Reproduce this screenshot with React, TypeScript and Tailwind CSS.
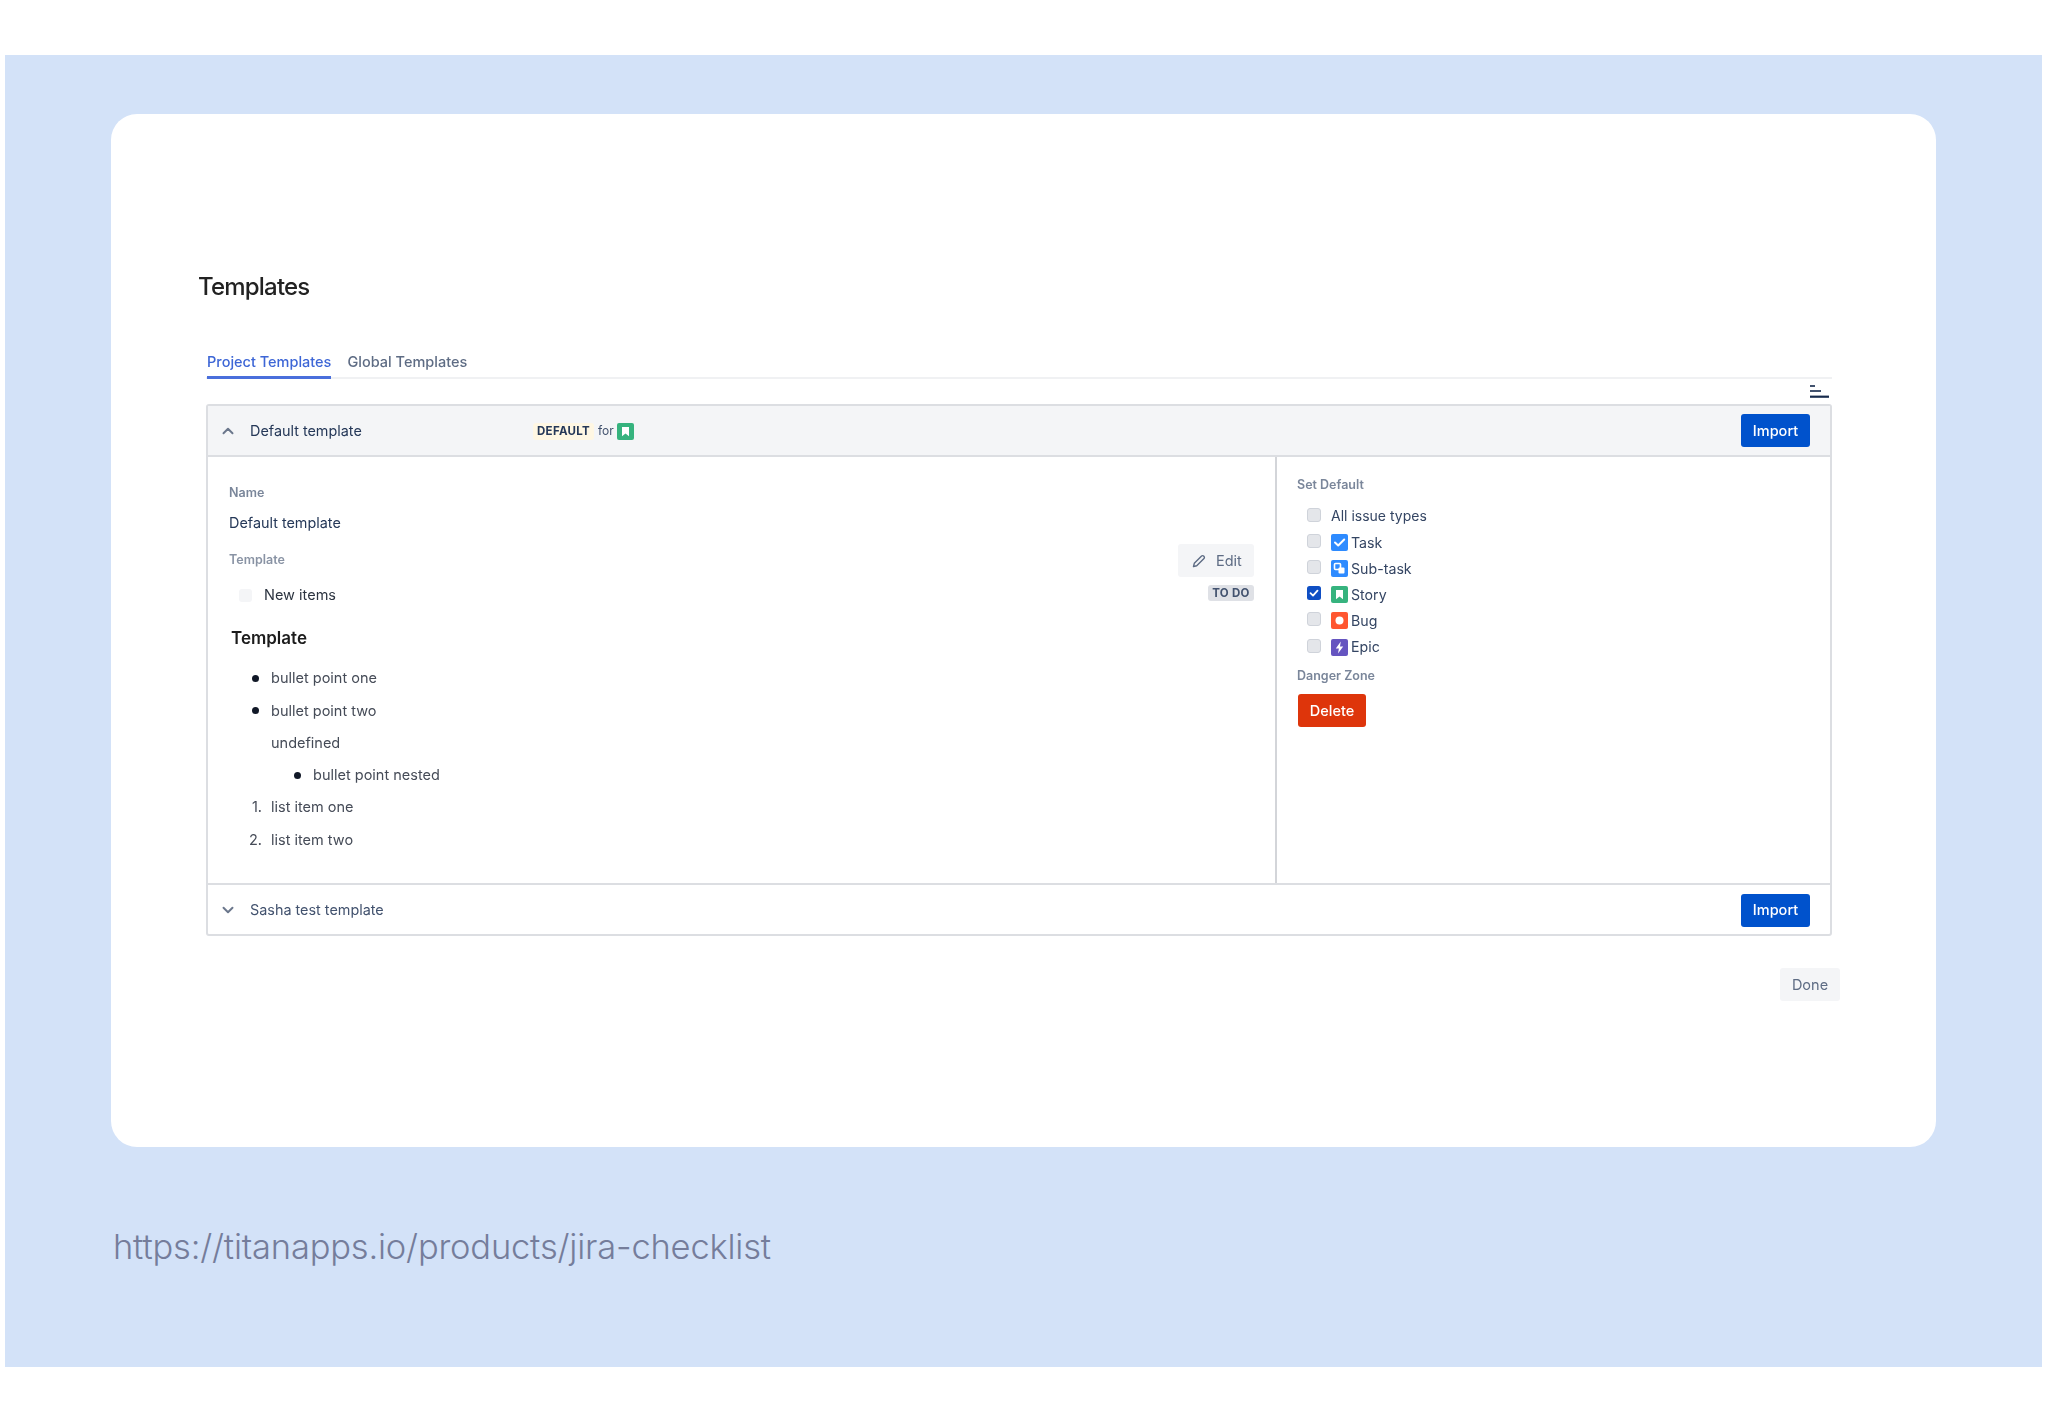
import { ChevronDown, ChevronUp } from "lucide-react";
import type { ReactNode } from "react";

const issueTypes = [
  { name: "Task", icon: <TaskIcon />, checked: false },
  { name: "Sub-task", icon: <SubTaskIcon />, checked: false },
  { name: "Story", icon: <StoryIcon />, checked: true },
  { name: "Bug", icon: <BugIcon />, checked: false },
  { name: "Epic", icon: <EpicIcon />, checked: false },
];

function IconBox({ color, children }: { color: string; children: ReactNode }) {
  return (
    <svg viewBox="0 0 17 17" className="h-[17px] w-[17px] shrink-0">
      <rect width="17" height="17" rx="2" fill={color} />
      {children}
    </svg>
  );
}

function TaskIcon() {
  return (
    <IconBox color="#2e8bff">
      <path d="M4 8.5l3.2 3L13.2 5.5" fill="none" stroke="#fff" strokeWidth="2" strokeLinecap="round" strokeLinejoin="round" />
    </IconBox>
  );
}

function SubTaskIcon() {
  return (
    <IconBox color="#2e8bff">
      <rect x="3.5" y="3.5" width="6" height="6" rx="1" fill="none" stroke="#fff" strokeWidth="1.6" />
      <rect x="7.5" y="7.5" width="6" height="6" rx="1" fill="#fff" />
    </IconBox>
  );
}

function StoryIcon() {
  return (
    <IconBox color="#36b37e">
      <path d="M5 4h7v9.2L8.5 10.6 5 13.2z" fill="#fff" />
    </IconBox>
  );
}

function BugIcon() {
  return (
    <IconBox color="#ff5630">
      <circle cx="8.5" cy="8.5" r="4" fill="#fff" />
    </IconBox>
  );
}

function EpicIcon() {
  return (
    <IconBox color="#6554c0">
      <path d="M9.8 2.5L4.8 9.4h3.1L7 14.5 12.2 7.4H9z" fill="#fff" />
    </IconBox>
  );
}

function Checkbox({ checked }: { checked?: boolean }) {
  if (checked) {
    return (
      <svg viewBox="0 0 14 14" className="h-[14px] w-[14px] shrink-0">
        <rect width="14" height="14" rx="2.5" fill="#0f4fc4" />
        <path d="M3.5 7.2l2.5 2.4 4.5-5" fill="none" stroke="#fff" strokeWidth="1.8" strokeLinecap="round" strokeLinejoin="round" />
      </svg>
    );
  }
  return <span className="h-[14px] w-[14px] shrink-0 rounded-[3px] border border-[#cfd3da] bg-[#e4e6ea]" />;
}

function ImportButton() {
  return (
    <button className="h-[33px] w-[69px] rounded-[3px] bg-[#0052cc] text-[14.5px] font-medium text-white">
      Import
    </button>
  );
}

function ListRow({ marker, nested, children }: { marker: ReactNode; nested?: boolean; children: ReactNode }) {
  return (
    <li className={`flex h-[32.3px] items-center text-[14.5px] text-[#454b57] ${nested ? "pl-[42px]" : ""}`}>
      <span className="flex w-[42px] shrink-0 justify-end">{marker}</span>
      {children}
    </li>
  );
}

const dot = <span className="mr-[12px] h-[7px] w-[7px] rounded-full bg-[#111827]" />;
const num = (n: number) => <span className="mr-[9px] text-[14.5px] text-[#454b57]">{n}.</span>;

export default function App() {
  return (
    <div className="h-[1423px] w-[2048px] overflow-hidden bg-white pl-[5px] pt-[55px] font-['Inter',sans-serif]">
      <div className="h-[1312px] w-[2037px] bg-[#d3e2f8] pl-[106px] pt-[59px]">
        <div className="h-[1033px] w-[1825px] rounded-[26px] bg-white pl-[87px] pt-[157px] blur-[0.7px]">
          <h1 className="h-[32px] text-[24px] font-medium leading-[32px] tracking-[-0.8px] text-[#222222]">Templates</h1>

          <div className="ml-[8px] w-[1626px]">
            <div className="mt-[46px] flex h-[30px] gap-[16px] border-b-2 border-[#f0f1f3] pl-[1px] text-[14.5px] font-medium">
              <span className="-mb-[2px] h-[30px] border-b-[3px] border-[#4a6fdc] leading-[26px] text-[#3d66d6]">
                Project Templates
              </span>
              <span className="leading-[26px] text-[#5e6c84]">Global Templates</span>
            </div>

            <div className="flex h-[25px] justify-end pr-[3px] pt-[6px]">
              <svg viewBox="0 0 19 14" className="h-[14px] w-[19px]">
                <rect x="0" y="0" width="5" height="2" fill="#42526e" />
                <rect x="0" y="5" width="11" height="2" fill="#42526e" />
                <rect x="0" y="10.6" width="19" height="2.2" fill="#172b4d" />
              </svg>
            </div>

            <div className="h-[532px] rounded-[3px] border-2 border-[#dcdee2]">
              <div className="flex h-[51px] items-center border-b-2 border-[#dcdee2] bg-[#f4f5f7] pl-[11px] pr-[20px]">
                <ChevronUp className="h-[18px] w-[18px] text-[#6b778c]" strokeWidth={2.6} />
                <span className="ml-[13px] w-[283px] text-[14.4px] text-[#253858]">Default template</span>
                <span className="mt-[1px] rounded-[3px] bg-[#fff7e3] px-[4px] text-[11.5px] font-bold leading-[17px] tracking-[0.3px] text-[#253858]">
                  DEFAULT
                </span>
                <span className="ml-[4px] mr-[3px] mt-[1px] text-[12px] text-[#42526e]">for</span>
                <span className="mt-[1px] flex">
                  <StoryIcon />
                </span>
                <span className="ml-auto">
                  <ImportButton />
                </span>
              </div>

              <div className="flex h-[428px] border-b-2 border-[#dcdee2]">
                <div className="w-[1069px] border-r-2 border-[#d3d5d9] pl-[21px] pr-[21px] pt-[27px]">
                  <div className="h-[18px] text-[12.5px] font-semibold leading-[18px] text-[#7a869a]">Name</div>
                  <div className="mt-[9px] h-[24px] text-[14.4px] leading-[24px] text-[#253858]">Default template</div>
                  <div className="mt-[9px] flex h-[33px] items-center justify-between">
                    <span className="text-[12.5px] font-semibold text-[#8993a4]">Template</span>
                    <button className="flex h-[33px] w-[76px] items-center gap-[10px] rounded-[3px] bg-[#f4f5f7] pl-[14px] text-[14.5px] text-[#5e6c84]">
                      <svg viewBox="0 0 14 14" className="h-[14px] w-[14px]">
                        <path d="M1.5 12.5l.8-3.2L9.6 2a1.4 1.4 0 012 0l.4.4a1.4 1.4 0 010 2L4.7 11.7z" fill="none" stroke="#5e6c84" strokeWidth="1.4" strokeLinejoin="round" />
                      </svg>
                      Edit
                    </button>
                  </div>
                  <div className="mt-[8px] flex h-[20px] items-start justify-between">
                    <div className="flex h-[20px] items-center pl-[10px]">
                      <span className="h-[13px] w-[13px] rounded-[3px] bg-[#f4f5f7]" />
                      <span className="ml-[12px] text-[14.5px] text-[#2c3440]">New items</span>
                    </div>
                    <span className="h-[16px] w-[46px] rounded-[3px] bg-[#dfe1e6] text-center text-[11.5px] font-bold leading-[16px] tracking-[0.3px] text-[#42526e]">
                      TO DO
                    </span>
                  </div>
                  <h2 className="ml-[2px] mt-[21px] h-[24px] text-[17px] font-semibold leading-[24px] text-[#1c1c1c]">Template</h2>
                  <ul className="mt-[12px]">
                    <ListRow marker={dot}>bullet point one</ListRow>
                    <ListRow marker={dot}>bullet point two</ListRow>
                    <ListRow marker={null}>undefined</ListRow>
                    <ListRow marker={dot} nested>bullet point nested</ListRow>
                    <ListRow marker={num(1)}>list item one</ListRow>
                    <ListRow marker={num(2)}>list item two</ListRow>
                  </ul>
                </div>

                <div className="flex-1 pl-[20px] pt-[19px]">
                  <div className="h-[18px] text-[12.5px] font-semibold leading-[18px] text-[#7a869a]">Set Default</div>
                  <div className="mt-[9px] pl-[10px]">
                    <div className="flex h-[26.2px] items-center gap-[10px] pb-[2px] text-[14px] text-[#344563]">
                      <Checkbox />
                      All issue types
                    </div>
                    {issueTypes.map((t) => (
                      <div key={t.name} className="flex h-[26.2px] items-center text-[14.2px] text-[#344563]">
                        <span className="-mt-[3px] mr-[10px] flex">
                          <Checkbox checked={t.checked} />
                        </span>
                        {t.icon}
                        <span className="ml-[3px]">{t.name}</span>
                      </div>
                    ))}
                  </div>
                  <div className="mt-[7px] h-[18px] text-[12.5px] font-semibold leading-[18px] text-[#7a869a]">Danger Zone</div>
                  <button className="ml-[1px] mt-[9px] h-[33px] w-[68px] rounded-[3px] bg-[#de350b] text-[14.5px] font-medium text-white">
                    Delete
                  </button>
                </div>
              </div>

              <div className="flex h-[49px] items-center pl-[11px] pr-[20px] pt-[1px]">
                <ChevronDown className="h-[18px] w-[18px] text-[#6b778c]" strokeWidth={2.6} />
                <span className="ml-[13px] text-[14.4px] text-[#42526e]">Sasha test template</span>
                <span className="ml-auto">
                  <ImportButton />
                </span>
              </div>
            </div>

            <div className="-mr-[8px] mt-[32px] flex justify-end">
              <button className="h-[33px] w-[60px] rounded-[3px] bg-[#f4f5f7] text-[14.5px] text-[#5e6c84]">Done</button>
            </div>
          </div>
        </div>

        <p className="ml-[2px] mt-[76px] text-[34.5px] font-light leading-[48px] tracking-[-0.2px] text-[#757d9b]">
          https://titanapps.io/products/jira-checklist
        </p>
      </div>
    </div>
  );
}
